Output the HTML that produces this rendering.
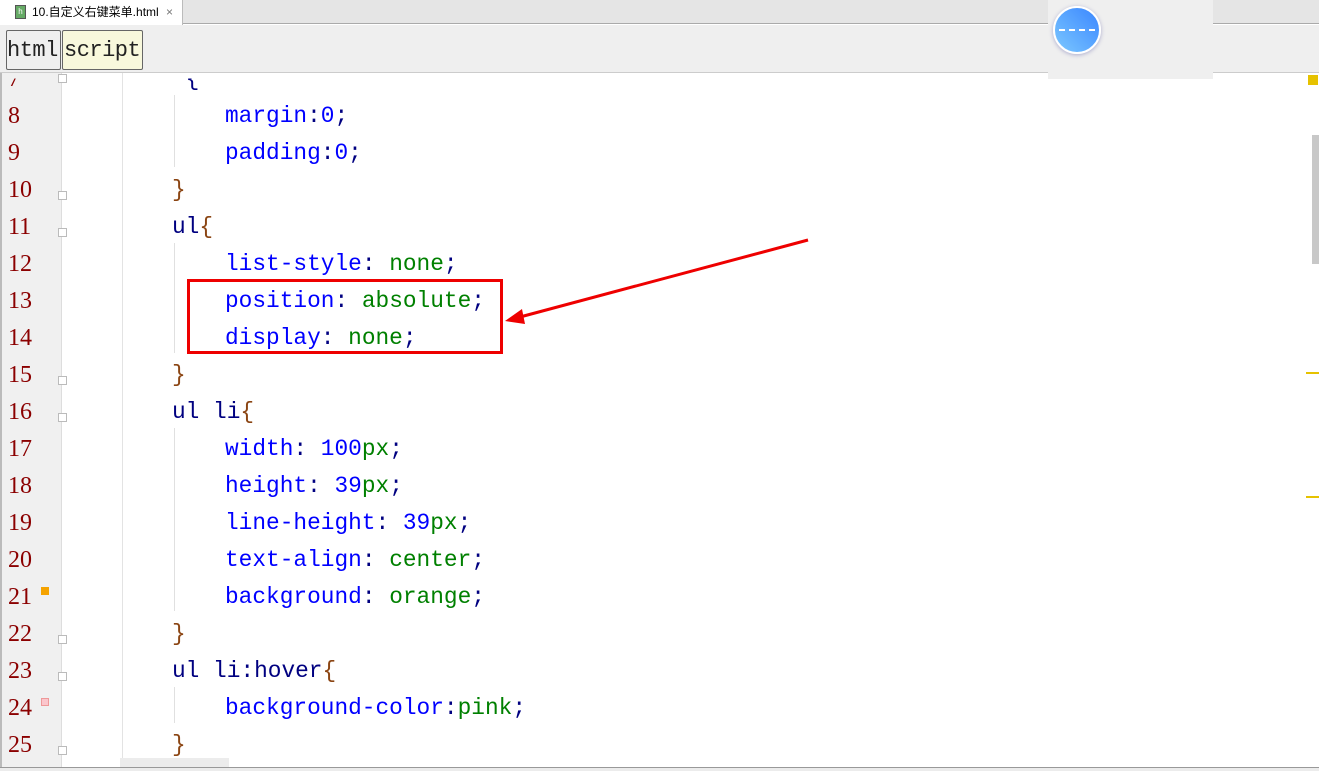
<!DOCTYPE html>
<html><head><meta charset="utf-8"><style>
*{margin:0;padding:0;box-sizing:border-box}
body{width:1319px;height:771px;overflow:hidden;background:#fff;position:relative;font-family:"Liberation Mono",monospace}
.abs{position:absolute}
.code{position:absolute;left:0;height:37px;line-height:37px;font-size:22.8px;white-space:pre;color:#000080}
.ln{position:absolute;left:8px;width:34px;height:37px;line-height:37px;font-size:24px;color:#8b0000;font-family:"Liberation Serif",serif}
.p{color:#0000ff}.v{color:#008000}.n{color:#0000ff}.b{color:#8b4513}
.fold{position:absolute;left:58px;width:9px;height:9px;border:1px solid #bbb;background:#fff}
</style></head><body>
<div class="abs" style="left:0;top:0;width:1319px;height:24px;background:#e5e5e5;border-bottom:1px solid #aaa"></div>
<div class="abs" style="left:0;top:0;width:183px;height:25px;background:#fff;border-right:1px solid #bbb;font-family:'Liberation Sans','Noto Sans CJK SC',sans-serif;font-size:12px;line-height:24px;padding-left:32px">10.自定义右键菜单.html <span style="color:#777;margin-left:4px">×</span></div>
<div class="abs" style="left:15px;top:5px;width:11px;height:14px;background:#6a6;border:1px solid #555;font-size:8px;color:#fff;text-align:center;line-height:12px;font-family:'Liberation Sans',sans-serif">h</div>
<div class="abs" style="left:0;top:25px;width:1319px;height:48px;background:#efefef;border-bottom:1px solid #ccc"></div>
<div class="abs" style="left:6px;top:30px;width:55px;height:40px;border:1px solid #666;border-radius:2px;background:#efefef;font-family:'Liberation Mono',monospace;font-size:22px;line-height:40px;color:#222;padding-left:0px;letter-spacing:-0.5px">html</div>
<div class="abs" style="left:62px;top:30px;width:81px;height:40px;border:1px solid #666;border-radius:2px;background:#f8f8dc;font-family:'Liberation Mono',monospace;font-size:22px;line-height:40px;color:#222;padding-left:1px;letter-spacing:-0.5px">script</div>
<div class="abs" style="left:1048px;top:0;width:165px;height:79px;background:#efefef"></div>
<div class="abs" style="left:1053px;top:6px;width:48px;height:48px;border-radius:50%;background:linear-gradient(45deg,#7cc8ff,#3a86ff);border:2px solid #fff;box-shadow:0 1px 4px #aac"></div>
<div class="abs" style="left:1059px;top:29px;width:36px;height:2px;border-top:2px dashed #fff"></div>
<div class="abs" style="left:0;top:73px;width:62px;height:694px;background:#f0f0f0;border-left:2px solid #bbb;border-right:1px solid #ddd"></div>
<div class="abs" style="left:122px;top:73px;width:1px;height:685px;background:#e3e3e3"></div>
<div id="lines"></div>
<div class="abs" style="left:174px;top:95px;width:1px;height:72px;background:#e0e0e0"></div>
<div class="abs" style="left:174px;top:243px;width:1px;height:110px;background:#e0e0e0"></div>
<div class="abs" style="left:174px;top:428px;width:1px;height:183px;background:#e0e0e0"></div>
<div class="abs" style="left:174px;top:687px;width:1px;height:36px;background:#e0e0e0"></div>
<div class="abs" style="left:41px;top:587px;width:8px;height:8px;background:#f5a300"></div>
<div class="abs" style="left:41px;top:698px;width:8px;height:8px;background:#fbc6cc;border:1px solid #e99"></div>
<div class="abs" style="left:1308px;top:75px;width:10px;height:10px;background:#e6c200"></div>
<div class="abs" style="left:1312px;top:135px;width:7px;height:129px;background:#c8c8c8"></div>
<div class="abs" style="left:1306px;top:372px;width:13px;height:2px;background:#e6c200"></div>
<div class="abs" style="left:1306px;top:496px;width:13px;height:2px;background:#e6c200"></div>
<div class="abs" style="left:120px;top:758px;width:109px;height:9px;background:#ececec"></div>
<div class="abs" style="left:0;top:767px;width:1319px;height:4px;background:#ececec;border-top:1px solid #999"></div>
<div class="abs" style="left:187px;top:279px;width:316px;height:75px;border:3px solid #e00"></div>
<svg class="abs" style="left:0;top:0" width="1319" height="771"><line x1="808" y1="240" x2="520" y2="317" stroke="#e00" stroke-width="3"/><polygon points="505,321 522,309 525,324" fill="#e00"/></svg>
<script>
var L={7:[172,'<span>*{</span>'],8:[225,'<span class="p">margin</span>:<span class="n">0</span>;'],9:[225,'<span class="p">padding</span>:<span class="n">0</span>;'],10:[172,'<span class="b">}</span>'],11:[172,'ul<span class="b">{</span>'],12:[225,'<span class="p">list-style</span>: <span class="v">none</span>;'],13:[225,'<span class="p">position</span>: <span class="v">absolute</span>;'],14:[225,'<span class="p">display</span>: <span class="v">none</span>;'],15:[172,'<span class="b">}</span>'],16:[172,'ul li<span class="b">{</span>'],17:[225,'<span class="p">width</span>: <span class="n">100</span><span class="v">px</span>;'],18:[225,'<span class="p">height</span>: <span class="n">39</span><span class="v">px</span>;'],19:[225,'<span class="p">line-height</span>: <span class="n">39</span><span class="v">px</span>;'],20:[225,'<span class="p">text-align</span>: <span class="v">center</span>;'],21:[225,'<span class="p">background</span>: <span class="v">orange</span>;'],22:[172,'<span class="b">}</span>'],23:[172,'ul li:hover<span class="b">{</span>'],24:[225,'<span class="p">background-color</span>:<span class="v">pink</span>;'],25:[172,'<span class="b">}</span>']};
var h='',folds=[7,10,11,15,16,22,23,25];
for(var n=7;n<=25;n++){var t=97.5+(n-8)*37;
var clip=n==7?'clip-path:inset(18px 0 0 0)':'';
h+='<div class="ln" style="top:'+t+'px;'+clip+'">'+n+'</div>';
h+='<div class="code" style="left:'+L[n][0]+'px;top:'+t+'px;'+clip+'">'+L[n][1]+'</div>';
if(folds.indexOf(n)>=0&&n>7)h+='<div class="fold" style="top:'+(t+19)+'px"></div>';}
h+='<div class="fold" style="top:74px"></div>';
document.getElementById('lines').innerHTML=h;
</script>
</body></html>
